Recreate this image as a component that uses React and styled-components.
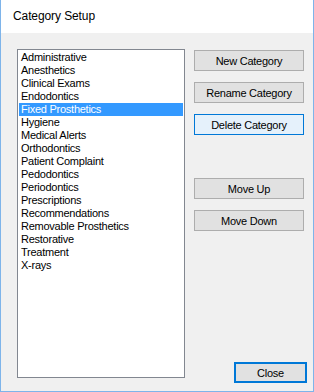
import React from "react";
import styled, { createGlobalStyle } from "styled-components";

const categories = [
  "Administrative",
  "Anesthetics",
  "Clinical Exams",
  "Endodontics",
  "Fixed Prosthetics",
  "Hygiene",
  "Medical Alerts",
  "Orthodontics",
  "Patient Complaint",
  "Pedodontics",
  "Periodontics",
  "Prescriptions",
  "Recommendations",
  "Removable Prosthetics",
  "Restorative",
  "Treatment",
  "X-rays",
];

const GlobalStyle = createGlobalStyle`
  html, body {
    margin: 0;
    padding: 0;
    background: #ffffff;
  }
  * {
    box-sizing: border-box;
  }
`;

function App() {
  const selected = 4;
  return (
    <>
      <GlobalStyle />
      <Window>
        <TitleBar>Category Setup</TitleBar>
        <Body>
          <ListBox>
            {categories.map((c, i) => (
              <ListItem key={c} $selected={i === selected}>
                {c}
              </ListItem>
            ))}
          </ListBox>
          <ButtonColumn>
            <Button>New Category</Button>
            <Button>Rename Category</Button>
            <Button $focused>Delete Category</Button>
            <Button $spaced>Move Up</Button>
            <Button>Move Down</Button>
            <CloseButton>Close</CloseButton>
          </ButtonColumn>
        </Body>
      </Window>
    </>
  );
}

const Window = styled.div`
  width: 314px;
  height: 392px;
  display: flex;
  flex-direction: column;
  border: 1px solid #7eb4ea;
  border-top: none;
  background: #f0f0f0;
  font-family: "Liberation Sans", Arial, sans-serif;
  letter-spacing: -0.25px;
`;

const TitleBar = styled.div`
  height: 33px;
  flex-shrink: 0;
  background: #ffffff;
  padding: 0 0 1px 12px;
  display: flex;
  align-items: center;
  font-size: 12px;
  letter-spacing: -0.1px;
  color: #000000;
`;

const Body = styled.div`
  flex: 1;
  display: flex;
  align-items: stretch;
  padding: 16px 6px 8px 16px;
`;

const ListBox = styled.div`
  width: 168px;
  height: 329px;
  flex-shrink: 0;
  background: #ffffff;
  border: 1px solid #828790;
  padding: 1px;
`;

const ListItem = styled.div`
  height: 13px;
  line-height: 13px;
  padding-left: 2px;
  font-size: 11px;
  white-space: nowrap;
  color: ${(p) => (p.$selected ? "#ffffff" : "#000000")};
  background: ${(p) => (p.$selected ? "#3399ff" : "transparent")};
`;

const ButtonColumn = styled.div`
  flex: 1;
  display: flex;
  flex-direction: column;
  align-items: flex-start;
  gap: 11px;
  padding-left: 9px;
  padding-top: 1px;
`;

const Button = styled.div`
  width: 110px;
  height: 21px;
  display: flex;
  align-items: center;
  justify-content: center;
  font-size: 11px;
  color: #000000;
  background: ${(p) => (p.$focused ? "#e5f1fb" : "#e1e1e1")};
  border: 1px solid ${(p) => (p.$focused ? "#0078d7" : "#adadad")};
  margin-top: ${(p) => (p.$spaced ? "32px" : "0")};
`;

const CloseButton = styled(Button)`
  width: 73px;
  margin-top: auto;
  align-self: flex-end;
  border: 2px solid #0078d7;
  background: #e1e1e1;
`;

export default App;
